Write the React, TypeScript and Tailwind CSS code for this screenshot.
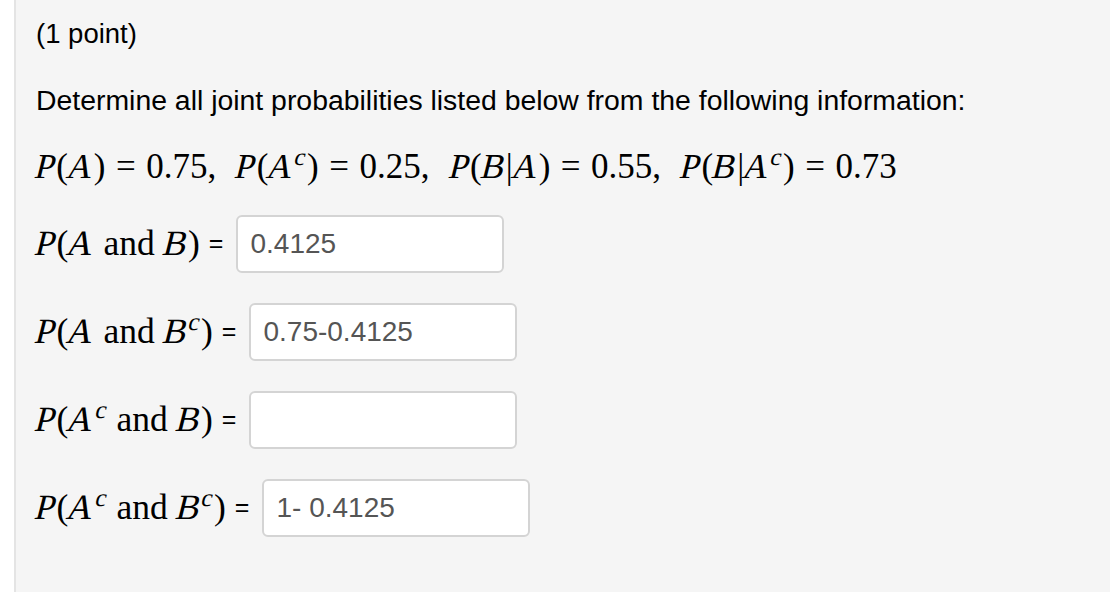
import React from 'react';

const serif = "font-['Liberation_Serif','Times_New_Roman',serif]";

function Sup({ children }: { children: React.ReactNode }) {
  return (
    <sup className="text-[0.7em] relative -top-[0.55em] ml-[0.05em] mr-[0.03em] leading-none inline-block -skew-x-[14deg]">
      {children}
    </sup>
  );
}

function I({ children }: { children: React.ReactNode }) {
  return <span className="inline-block -skew-x-[14deg] mr-[0.02em]">{children}</span>;
}

function Eq() {
  return <span className="mx-[0.3em]">=</span>;
}

function AnswerRow({ label, value }: { label: React.ReactNode; value: string }) {
  return (
    <div className="flex items-center h-[58px]">
      <span className={`${serif} text-[35.5px] leading-none text-black`}>{label}</span>
      <span className="text-[25px] ml-[9px] mr-[13px] text-black">=</span>
      <input
        readOnly
        value={value}
        className="h-[58px] w-[268px] bg-white border-2 border-[#d4d4d4] rounded-[6px] px-[12px] text-[28px] text-[#555] outline-none font-['Liberation_Sans',Arial,sans-serif]"
      />
    </div>
  );
}

export default function App() {
  return (
    <div className="w-[1110px] h-[592px] bg-white flex font-['Liberation_Sans',Arial,sans-serif] overflow-hidden">
      <div className="w-[14px] shrink-0 bg-white" />
      <div className="flex-1 bg-[#f5f5f5] border-l-2 border-[#e4e4e4] pl-[20px] pt-[14px]">
        <p className="text-[27.5px] leading-[40px] text-black">(1 point)</p>
        <p className="text-[28.4px] leading-[40px] text-black mt-[26px]">
          Determine all joint probabilities listed below from the following information:
        </p>
        <div className={`${serif} text-[35px] leading-[40px] text-black mt-[27px]`}>
          <I>P</I>(<I>A</I>)<Eq />0.75,
          <span className="ml-[0.58em]"><I>P</I>(<I>A</I><Sup>c</Sup>)<Eq />0.25,</span>
          <span className="ml-[0.58em]"><I>P</I>(<I>B</I>|<I>A</I>)<Eq />0.55,</span>
          <span className="ml-[0.58em]"><I>P</I>(<I>B</I>|<I>A</I><Sup>c</Sup>)<Eq />0.73</span>
        </div>
        <div className="flex flex-col gap-[30px] mt-[28px]">
          <AnswerRow label={<><I>P</I>(<I>A</I> and <I>B</I>)</>} value="0.4125" />
          <AnswerRow label={<><I>P</I>(<I>A</I> and <I>B</I><Sup>c</Sup>)</>} value="0.75-0.4125" />
          <AnswerRow label={<><I>P</I>(<I>A</I><Sup>c</Sup> and <I>B</I>)</>} value="" />
          <AnswerRow label={<><I>P</I>(<I>A</I><Sup>c</Sup> and <I>B</I><Sup>c</Sup>)</>} value="1- 0.4125" />
        </div>
      </div>
    </div>
  );
}
